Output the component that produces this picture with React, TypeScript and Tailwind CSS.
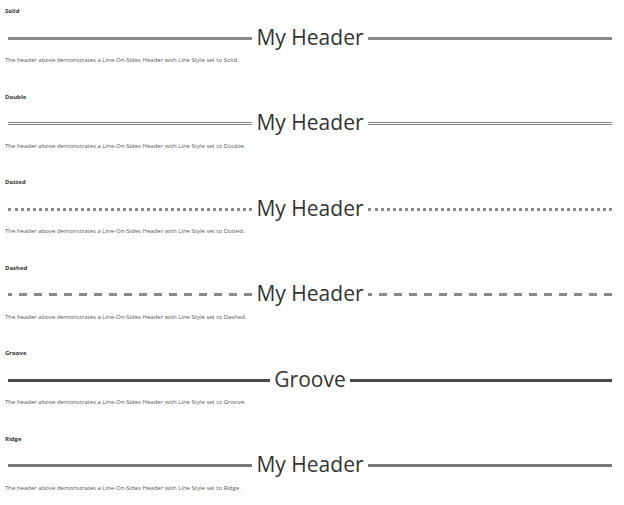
const sections = [
  { label: "Solid", title: "My Header", line: "border-t-[3px] border-solid border-[#8a8a8a]" },
  { label: "Double", title: "My Header", line: "border-t-[3px] border-double border-[#8a8a8a]" },
  { label: "Dotted", title: "My Header", line: "border-t-[3px] border-dotted border-[#8a8a8a]" },
  {
    label: "Dashed",
    title: "My Header",
    line: "h-[3px] bg-[repeating-linear-gradient(to_left,#8a8a8a_0_8px,transparent_8px_15px)]",
  },
  { label: "Groove", title: "Groove", line: "border-t-[3px] border-groove border-[#4a4a4a]" },
  { label: "Ridge", title: "My Header", line: "border-t-[3px] border-ridge border-[#777]" },
];

function SideLine({ line }: { line: string }) {
  return <div className={`flex-1 ${line}`} />;
}

export default function App() {
  return (
    <div className="w-[624px] bg-white font-['Open_Sans',sans-serif]">
      {sections.map((s) => (
        <div key={s.label} className="h-[85.6px] flex flex-col pl-[5px] pt-[7px]">
          <div className="text-[6px] leading-[8px] font-bold text-[#333]">{s.label}</div>
          <div className="mt-[9px] ml-[3px] mr-[12px] h-[28px] flex items-center gap-[4px]">
            <SideLine line={s.line} />
            <h2 className="mb-[3px] text-[21px] leading-[28px] text-[#333] whitespace-nowrap">{s.title}</h2>
            <SideLine line={s.line} />
          </div>
          <p className="mt-[4px] text-[6px] leading-[8px] text-[#555]">
            The header above demonstrates a Line-On-Sides Header with Line Style set to {s.label}.
          </p>
        </div>
      ))}
    </div>
  );
}
